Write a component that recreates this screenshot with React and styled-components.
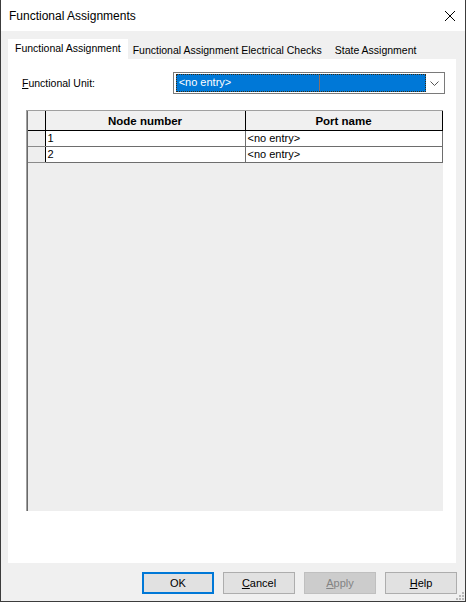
import React from 'react';
import styled, { createGlobalStyle } from 'styled-components';

const GlobalStyle = createGlobalStyle`
  html, body {
    margin: 0;
    padding: 0;
    background: #ffffff;
  }
  body {
    font-family: "Liberation Sans", Arial, sans-serif;
    color: #000;
  }
`;

const Window = styled.div`
  width: 466px;
  height: 602px;
  box-sizing: border-box;
  display: flex;
  flex-direction: column;
  border: 1px solid #3c3c3c;
  border-top: none;
  background: #f0f0f0;
  position: relative;
`;

const TitleBar = styled.div`
  height: 31px;
  flex: none;
  display: flex;
  align-items: center;
  justify-content: space-between;
  background: #ffffff;
  padding: 0 9px 0 8px;
`;

const Title = styled.span`
  font-size: 12px;
  margin-top: 1px;
`;

const CloseButton = styled.div`
  width: 12px;
  height: 12px;
  display: flex;
  margin-top: 1px;
`;

const Body = styled.div`
  flex: 1;
  display: flex;
  flex-direction: column;
  padding: 8px 9px 0 7px;
`;

const TabStrip = styled.div`
  display: flex;
  align-items: flex-end;
  height: 20px;
  flex: none;
`;

const Tab = styled.div`
  font-size: 10.5px;
  height: ${p => (p.active ? '20px' : '18px')};
  box-sizing: border-box;
  padding: ${p => (p.active ? '3px 7px 0 7px' : '3px 8px 0 5px')};
  background: ${p => (p.active ? '#ffffff' : 'transparent')};
  white-space: nowrap;
`;

const Panel = styled.div`
  flex: 1;
  background: #ffffff;
  display: flex;
  flex-direction: column;
  padding: 13px 11px 52px 14px;
`;

const FieldRow = styled.div`
  display: flex;
  align-items: center;
  height: 22px;
`;

const Label = styled.label`
  font-size: 10.5px;
  width: 151px;
  u { text-decoration: underline; }
`;

const Combo = styled.div`
  width: 273px;
  height: 22px;
  box-sizing: border-box;
  border: 1px solid #7a7a7a;
  background: #fff;
  display: flex;
  align-items: center;
  padding: 1px 0 1px 2px;
`;

const Selection = styled.div`
  flex: none;
  width: 250px;
  height: 18px;
  box-sizing: border-box;
  background: #0078d7;
  outline: 1px dotted #3a2a10;
  outline-offset: -1px;
  display: flex;
  color: #fff;
  font-size: 11px;
`;

const SelCell = styled.div`
  width: ${p => p.w}px;
  box-sizing: border-box;
  padding: 2px 0 0 3px;
  border-right: ${p => (p.divider ? '1px solid #8a6f64' : 'none')};
`;

const Chevron = styled.div`
  flex: 1;
  display: flex;
  justify-content: center;
  align-items: center;
`;

const Grid = styled.div`
  margin: 16px 0 0 4px;
  width: 417px;
  flex: 1;
  box-sizing: border-box;
  background: #eeeeee;
  border-top: 1px solid #a0a0a0;
  border-left: 1px solid #a0a0a0;
  box-shadow: inset 1px 0 0 #696969;
  padding-left: 1px;
`;

const Table = styled.table`
  border-collapse: collapse;
  table-layout: fixed;
  width: 414px;
  font-size: 11px;
`;

const HeadCell = styled.th`
  height: 19px;
  padding: 0;
  background: #f0f0f0;
  border-right: 1px solid #000;
  border-bottom: 1px solid #000;
  font-weight: bold;
  font-size: 11.5px;
  text-align: center;
`;

const RowHead = styled.td`
  height: 15px;
  padding: 0;
  background: #eeeeee;
  border-right: 1px solid #000;
  border-bottom: 1px solid #8a8a8a;
`;

const Cell = styled.td`
  height: 15px;
  padding: 0 0 0 2px;
  background: #fff;
  border-right: 1px solid #6d6d6d;
  border-bottom: 1px solid #6d6d6d;
  white-space: nowrap;
  line-height: 15px;
`;

const Footer = styled.div`
  height: 38px;
  flex: none;
  display: flex;
  justify-content: flex-end;
  align-items: flex-start;
  gap: 9px;
  padding: 9px 0 0 0;
  margin-right: -1px;
  box-sizing: border-box;
`;

const Button = styled.button`
  width: 72px;
  height: 22px;
  box-sizing: border-box;
  margin: 0;
  padding: 0;
  font-family: "Liberation Sans", Arial, sans-serif;
  font-size: 11px;
  color: ${p => (p.disabled ? '#838383' : '#000')};
  background: ${p => (p.disabled ? '#cccccc' : '#e1e1e1')};
  border: ${p =>
    p.primary ? '2px solid #0078d7' : p.disabled ? '1px solid #bfbfbf' : '1px solid #adadad'};
  border-radius: 0;
  u { text-decoration: underline; }
`;

const Grip = styled.svg`
  position: absolute;
  right: 1px;
  bottom: 1px;
`;

const rows = [
  { node: '1', port: '<no entry>' },
  { node: '2', port: '<no entry>' },
];

export default function App() {
  return (
    <>
      <GlobalStyle />
      <Window>
        <TitleBar>
          <Title>Functional Assignments</Title>
          <CloseButton>
            <svg width="12" height="12" viewBox="0 0 12 12">
              <path d="M1 1 L11 11 M11 1 L1 11" stroke="#000" strokeWidth="1" fill="none" />
            </svg>
          </CloseButton>
        </TitleBar>
        <Body>
          <TabStrip>
            <Tab active>Functional Assignment</Tab>
            <Tab>Functional Assignment Electrical Checks</Tab>
            <Tab>State Assignment</Tab>
          </TabStrip>
          <Panel>
            <FieldRow>
              <Label><u>F</u>unctional Unit:</Label>
              <Combo>
                <Selection>
                  <SelCell w={144} divider>&lt;no entry&gt;</SelCell>
                  <SelCell w={106} />
                </Selection>
                <Chevron>
                  <svg width="9" height="5" viewBox="0 0 9 5">
                    <polyline points="0.5,0.5 4.5,4.5 8.5,0.5" stroke="#555" strokeWidth="1" fill="none" />
                  </svg>
                </Chevron>
              </Combo>
            </FieldRow>
            <Grid>
              <Table>
                <colgroup>
                  <col style={{ width: 17 }} />
                  <col style={{ width: 200 }} />
                  <col style={{ width: 197 }} />
                </colgroup>
                <thead>
                  <tr>
                    <HeadCell />
                    <HeadCell>Node number</HeadCell>
                    <HeadCell>Port name</HeadCell>
                  </tr>
                </thead>
                <tbody>
                  {rows.map(r => (
                    <tr key={r.node}>
                      <RowHead />
                      <Cell>{r.node}</Cell>
                      <Cell>{r.port}</Cell>
                    </tr>
                  ))}
                </tbody>
              </Table>
            </Grid>
          </Panel>
          <Footer>
            <Button primary>OK</Button>
            <Button><u>C</u>ancel</Button>
            <Button disabled><u>A</u>pply</Button>
            <Button><u>H</u>elp</Button>
          </Footer>
        </Body>
        <Grip width="9" height="9" viewBox="0 0 9 9">
          {[[6, 0], [3, 3], [6, 3], [0, 6], [3, 6], [6, 6]].map(([x, y]) => (
            <rect key={`${x}-${y}`} x={x + 1} y={y + 1} width="2" height="2" fill="#b8b8b8" />
          ))}
        </Grip>
      </Window>
    </>
  );
}
